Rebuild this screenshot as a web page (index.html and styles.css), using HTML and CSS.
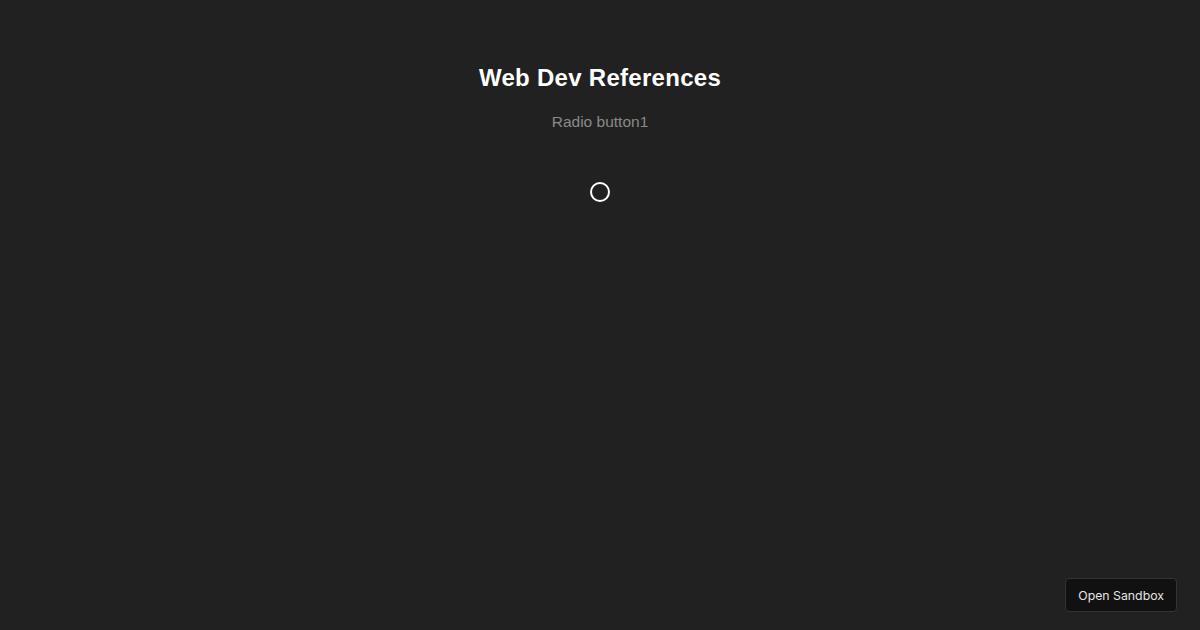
FILE: index.html
```html
<!DOCTYPE html>
<html>
<head>
<meta charset="utf-8">
<link rel="stylesheet" href="styles.css">
</head>
<body>
<main class="page">
  <h1 class="title">Web Dev References</h1>
  <p class="subtitle">Radio button1</p>
  <div class="demo">
    <input class="radio" type="radio" name="r1" aria-label="Radio button1">
  </div>
</main>
<button class="sandbox">Open Sandbox</button>
</body>
</html>
```
FILE: styles.css
```css
html, body {
  margin: 0;
  padding: 0;
  height: 100%;
  background: #212121;
}
body {
  font-family: "Liberation Sans", Arial, sans-serif;
  color: #fff;
}
.page {
  display: flex;
  flex-direction: column;
  align-items: center;
  padding-top: 64px;
}
.title {
  margin: 0;
  font-size: 24px;
  font-weight: 700;
  line-height: 28px;
  letter-spacing: 0.28px;
  color: #fff;
}
.subtitle {
  margin: 21px 0 0;
  font-size: 15.5px;
  line-height: 18px;
  color: #8a8a8a;
}
.demo {
  margin-top: 51px;
  display: flex;
  justify-content: center;
}
.radio {
  appearance: none;
  -webkit-appearance: none;
  margin: 0;
  width: 20px;
  height: 20px;
  border: 2px solid #fff;
  border-radius: 50%;
  background: transparent;
  box-sizing: border-box;
}
.sandbox {
  position: fixed;
  right: 23px;
  bottom: 18px;
  height: 34px;
  padding: 0 12px;
  background: #111;
  color: #e6e6e6;
  border: 1px solid #333;
  border-radius: 4px;
  font-family: Inter, "Liberation Sans", sans-serif;
  font-size: 12.3px;
}
```
